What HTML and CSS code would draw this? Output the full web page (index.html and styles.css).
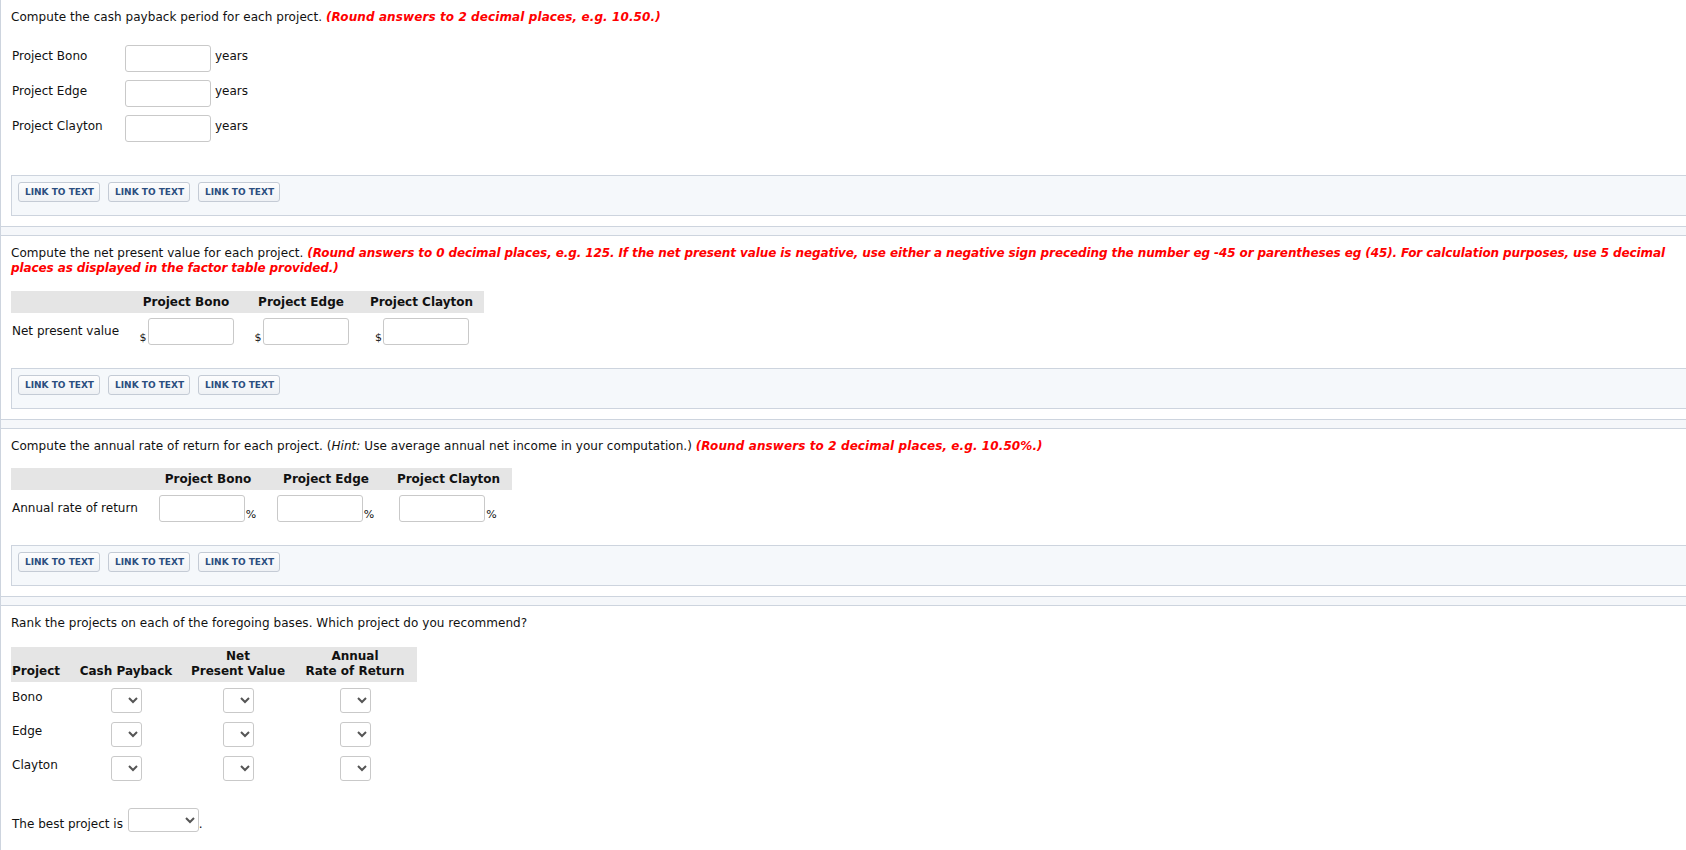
FILE: index.html
```html
<!DOCTYPE html>
<html lang="en">
<head>
    <meta charset="UTF-8">
    <title>Capital budgeting</title>
    <link rel="stylesheet" href="styles.css">
</head>
<body>
<div class="questions">

    <!-- cash payback -->
    <div class="question first">
        <p class="prompt">Compute the cash payback period for each project. <span class="hint">(Round answers to 2 decimal places, e.g. 10.50.)</span></p>
        <div class="payback-row">
            <span class="row-label">Project Bono</span>
            <input type="text" class="answer">
            <span class="unit">years</span>
        </div>
        <div class="payback-row">
            <span class="row-label">Project Edge</span>
            <input type="text" class="answer">
            <span class="unit">years</span>
        </div>
        <div class="payback-row">
            <span class="row-label">Project Clayton</span>
            <input type="text" class="answer">
            <span class="unit">years</span>
        </div>
        <div class="links links-first">
            <button class="link-btn">LINK TO TEXT</button><button class="link-btn">LINK TO TEXT</button><button class="link-btn">LINK TO TEXT</button>
        </div>
    </div>

    <!-- net present value -->
    <div class="question">
        <p class="prompt">Compute the net present value for each project. <span class="hint long">(Round answers to 0 decimal places, e.g. 125. If the net present value is negative, use either a negative sign preceding the number eg -45 or parentheses eg (45). For calculation purposes, use 5 decimal places as displayed in the factor table provided.)</span></p>
        <table class="grid npv-grid">
            <colgroup>
                <col style="width:118px"><col style="width:114px"><col style="width:116px"><col style="width:125px">
            </colgroup>
            <thead>
                <tr><th></th><th>Project Bono</th><th>Project Edge</th><th>Project Clayton</th></tr>
            </thead>
            <tbody>
                <tr>
                    <td class="cell-label">Net present value</td>
                    <td class="cell-input"><span class="sign">$</span><input type="text" class="answer"></td>
                    <td class="cell-input"><span class="sign">$</span><input type="text" class="answer"></td>
                    <td class="cell-input"><span class="sign">$</span><input type="text" class="answer"></td>
                </tr>
            </tbody>
        </table>
        <div class="links">
            <button class="link-btn">LINK TO TEXT</button><button class="link-btn">LINK TO TEXT</button><button class="link-btn">LINK TO TEXT</button>
        </div>
    </div>

    <!-- annual rate of return -->
    <div class="question">
        <p class="prompt single">Compute the annual rate of return for each project. (<i>Hint:</i> Use average annual net income in your computation.) <span class="hint">(Round answers to 2 decimal places, e.g. 10.50%.)</span></p>
        <table class="grid arr-grid">
            <colgroup>
                <col style="width:138px"><col style="width:118px"><col style="width:118px"><col style="width:127px">
            </colgroup>
            <thead>
                <tr><th></th><th>Project Bono</th><th>Project Edge</th><th>Project Clayton</th></tr>
            </thead>
            <tbody>
                <tr>
                    <td class="cell-label">Annual rate of return</td>
                    <td class="cell-input"><input type="text" class="answer"><span class="sign">%</span></td>
                    <td class="cell-input"><input type="text" class="answer"><span class="sign">%</span></td>
                    <td class="cell-input"><input type="text" class="answer"><span class="sign">%</span></td>
                </tr>
            </tbody>
        </table>
        <div class="links">
            <button class="link-btn">LINK TO TEXT</button><button class="link-btn">LINK TO TEXT</button><button class="link-btn">LINK TO TEXT</button>
        </div>
    </div>

    <!-- ranking -->
    <div class="question last">
        <p class="prompt rank-prompt">Rank the projects on each of the foregoing bases. Which project do you recommend?</p>
        <table class="grid rank-grid">
            <colgroup>
                <col style="width:58px"><col style="width:114px"><col style="width:110px"><col style="width:124px">
            </colgroup>
            <thead>
                <tr>
                    <th class="left">Project</th>
                    <th>Cash Payback</th>
                    <th>Net<br>Present Value</th>
                    <th>Annual<br>Rate of Return</th>
                </tr>
            </thead>
            <tbody>
                <tr>
                    <td class="rank-label">Bono</td>
                    <td class="rank-cell"><select class="rank"><option></option><option>1</option><option>2</option><option>3</option></select></td>
                    <td class="rank-cell"><select class="rank"><option></option><option>1</option><option>2</option><option>3</option></select></td>
                    <td class="rank-cell"><select class="rank"><option></option><option>1</option><option>2</option><option>3</option></select></td>
                </tr>
                <tr>
                    <td class="rank-label">Edge</td>
                    <td class="rank-cell"><select class="rank"><option></option><option>1</option><option>2</option><option>3</option></select></td>
                    <td class="rank-cell"><select class="rank"><option></option><option>1</option><option>2</option><option>3</option></select></td>
                    <td class="rank-cell"><select class="rank"><option></option><option>1</option><option>2</option><option>3</option></select></td>
                </tr>
                <tr>
                    <td class="rank-label">Clayton</td>
                    <td class="rank-cell"><select class="rank"><option></option><option>1</option><option>2</option><option>3</option></select></td>
                    <td class="rank-cell"><select class="rank"><option></option><option>1</option><option>2</option><option>3</option></select></td>
                    <td class="rank-cell"><select class="rank"><option></option><option>1</option><option>2</option><option>3</option></select></td>
                </tr>
            </tbody>
        </table>
        <p class="best">The best project is <select class="pick"><option></option><option>Bono</option><option>Edge</option><option>Clayton</option></select>.</p>
    </div>

</div>
</body>
</html>
```

FILE: styles.css
```css
body {
    margin: 0;
    background-color: #fff;
    font-family: "DejaVu Sans", Verdana, sans-serif;
    font-size: 12px;
    line-height: 15px;
    color: #111;
    overflow: hidden;
}
.questions {
    border-left: 1px solid #cdd4de;
    background-color: #f5f7fa;
    min-height: 850px;
}
.question {
    background-color: #fff;
    border-top: 1px solid #cdd4de;
    border-bottom: 1px solid #cdd4de;
    padding: 10px 0 10px 10px;
    margin-bottom: 8px;
}
.question.first {
    border-top: 0;
}
.question.last {
    margin-bottom: 0;
    min-height: 260px;
}
.prompt {
    margin: 0 0 15px;
    letter-spacing: 0.05px;
}
.prompt.single {
    margin-bottom: 14px;
}
.prompt.rank-prompt {
    margin-bottom: 16px;
}
.hint {
    color: #ff0000;
    font-weight: bold;
    font-style: italic;
    letter-spacing: 0.1px;
}
.hint.long {
    letter-spacing: -0.1px;
}

/* inputs */
.answer {
    box-sizing: border-box;
    width: 86px;
    height: 27px;
    margin: 0;
    border: 1px solid #c9c9c9;
    border-radius: 3px;
    padding: 2px 4px;
    font: inherit;
    background-color: #fff;
}

/* payback rows */
.payback-row {
    display: flex;
    align-items: flex-start;
    margin-bottom: 8px;
}
.first .prompt {
    margin-bottom: 20px;
}
.row-label {
    width: 113px;
    padding-top: 4px;
    padding-left: 1px;
}
.unit {
    padding-top: 4px;
    margin-left: 4px;
}

/* tables */
.grid {
    border-collapse: collapse;
    table-layout: fixed;
}
.grid th {
    background-color: #e5e5e5;
    font-weight: bold;
    text-align: center;
    padding: 4px 0 3px;
    white-space: nowrap;
}
.grid th.left {
    text-align: left;
    padding-left: 1px;
}
.cell-label {
    padding: 4px 0 4px 1px;
    vertical-align: middle;
    white-space: nowrap;
}
.cell-input {
    text-align: center;
    padding: 5px 0 4px;
    white-space: nowrap;
}
.cell-input .answer {
    vertical-align: bottom;
}
.sign {
    font-size: 11px;
    margin: 0 1px;
}

.rank-grid thead th {
    vertical-align: bottom;
    padding: 2px 0 3px;
}
.rank-label {
    padding: 8px 0 0 1px;
    vertical-align: top;
    height: 26px;
}
.rank-cell {
    text-align: center;
    vertical-align: top;
    padding: 6px 0 3px;
}
.rank, .pick {
    box-sizing: border-box;
    height: 25px;
    border: 1px solid #c9c9c9;
    border-radius: 3px;
    background-color: #fff;
    font: inherit;
    color: #555;
}
.rank {
    width: 31px;
}
.pick {
    width: 71px;
    height: 24px;
    margin-left: 1px;
    vertical-align: bottom;
}
.best {
    margin: 24px 0 0 1px;
}

/* link buttons */
.links {
    margin-top: 19px;
    background-color: #f5f8fb;
    border: 1px solid #cdd4de;
    border-right: 0;
    padding: 6px 6px 13px;
}
.links-first {
    margin-top: 33px;
}
.link-btn {
    box-sizing: border-box;
    height: 20px;
    margin: 0 8px 0 0;
    padding: 0 5px 0 6px;
    border: 1px solid #c4cbd5;
    border-radius: 3px;
    background: linear-gradient(#fdfdfe, #eef1f5);
    color: #2b4e80;
    font-family: "DejaVu Sans", Verdana, sans-serif;
    font-size: 9px;
    font-weight: bold;
    vertical-align: top;
}
```
